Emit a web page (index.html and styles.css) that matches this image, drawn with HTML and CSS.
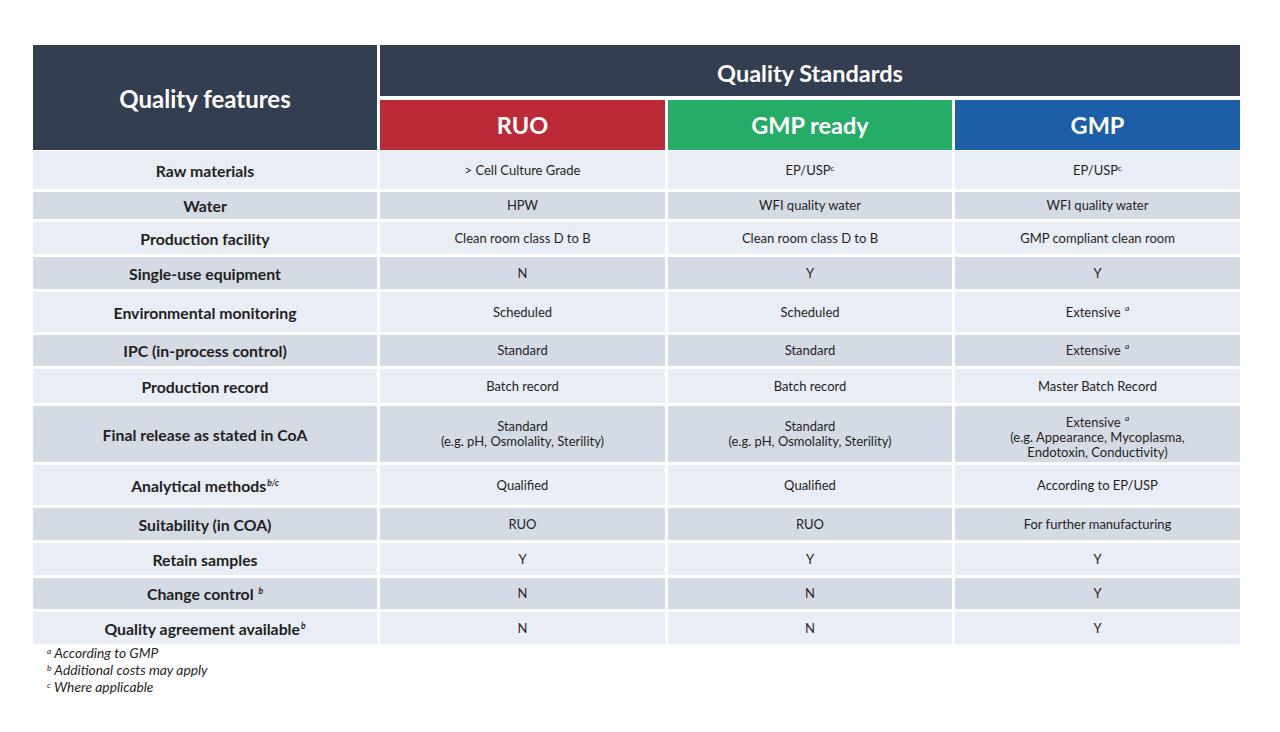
FILE: index.html
```html
<!DOCTYPE html>
<html>
<head>
<meta charset="utf-8">
<link rel="stylesheet" href="styles.css">
</head>
<body>
<div class="page">
  <div class="head">
    <div class="hcell features">Quality features</div>
    <div class="hcell standards">Quality Standards</div>
    <div class="hcell ruo">RUO</div>
    <div class="hcell ready">GMP ready</div>
    <div class="hcell gmp">GMP</div>
  </div>
  <div class="rows">
    <div class="row light h38"><div class="lab"><span>Raw materials</span></div><div class="val"><span>&gt; Cell Culture Grade</span></div><div class="val"><span>EP/USP<sup class="sc">c</sup></span></div><div class="val"><span>EP/USP<sup class="sc">c</sup></span></div></div>
    <div class="row dark h27"><div class="lab"><span>Water</span></div><div class="val"><span>HPW</span></div><div class="val"><span>WFI quality water</span></div><div class="val"><span>WFI quality water</span></div></div>
    <div class="row light h32"><div class="lab"><span>Production facility</span></div><div class="val"><span>Clean room class D to B</span></div><div class="val"><span>Clean room class D to B</span></div><div class="val"><span>GMP compliant clean room</span></div></div>
    <div class="row dark h32"><div class="lab"><span>Single-use equipment</span></div><div class="val"><span>N</span></div><div class="val"><span>Y</span></div><div class="val"><span>Y</span></div></div>
    <div class="row light h40"><div class="lab"><span>Environmental monitoring</span></div><div class="val"><span>Scheduled</span></div><div class="val"><span>Scheduled</span></div><div class="val"><span>Extensive <sup class="si">a</sup></span></div></div>
    <div class="row dark h31"><div class="lab"><span>IPC (in-process control)</span></div><div class="val"><span>Standard</span></div><div class="val"><span>Standard</span></div><div class="val"><span>Extensive <sup class="si">a</sup></span></div></div>
    <div class="row light h34"><div class="lab"><span>Production record</span></div><div class="val"><span>Batch record</span></div><div class="val"><span>Batch record</span></div><div class="val"><span>Master Batch Record</span></div></div>
    <div class="row dark h56"><div class="lab"><span>Final release as stated in CoA</span></div><div class="val"><span>Standard<br>(e.g. pH, Osmolality, Sterility)</span></div><div class="val"><span>Standard<br>(e.g. pH, Osmolality, Sterility)</span></div><div class="val three"><span>Extensive <sup class="si">a</sup><br>(e.g. Appearance, Mycoplasma,<br>Endotoxin, Conductivity)</span></div></div>
    <div class="row light h40"><div class="lab"><span>Analytical methods<sup class="si">b/c</sup></span></div><div class="val"><span>Qualified</span></div><div class="val"><span>Qualified</span></div><div class="val"><span>According to EP/USP</span></div></div>
    <div class="row dark h32"><div class="lab"><span>Suitability (in COA)</span></div><div class="val"><span>RUO</span></div><div class="val"><span>RUO</span></div><div class="val"><span>For further manufacturing</span></div></div>
    <div class="row light h32"><div class="lab"><span>Retain samples</span></div><div class="val"><span>Y</span></div><div class="val"><span>Y</span></div><div class="val"><span>Y</span></div></div>
    <div class="row dark h31"><div class="lab"><span>Change control <sup class="si">b</sup></span></div><div class="val"><span>N</span></div><div class="val"><span>N</span></div><div class="val"><span>Y</span></div></div>
    <div class="row light h32"><div class="lab"><span>Quality agreement available<sup class="si">b</sup></span></div><div class="val"><span>N</span></div><div class="val"><span>N</span></div><div class="val"><span>Y</span></div></div>
  </div>
  <div class="notes">
    <div><sup class="ns">a</sup> According to GMP</div>
    <div><sup class="ns">b</sup> Additional costs may apply</div>
    <div><sup class="ns">c</sup> Where applicable</div>
  </div>
</div>
</body>
</html>
```

FILE: styles.css
```css
html, body {
  margin: 0;
  padding: 0;
  background: #ffffff;
}
.page {
  padding: 45px 0 0 33px;
  font-family: Lato, "Liberation Sans", sans-serif;
  color: #1f1f1f;
}
.head {
  display: grid;
  grid-template-columns: 344px 285px 284px 285px;
  grid-template-rows: 51px 50px;
  column-gap: 3px;
  row-gap: 4px;
  width: 1207px;
}
.hcell {
  display: flex;
  align-items: center;
  justify-content: center;
  color: #ffffff;
  font-weight: 700;
  font-size: 23.5px;
}
.features {
  grid-row: 1 / 3;
  background: #333e50;
  padding-top: 1px;
  font-size: 24px;
}
.standards {
  grid-column: 2 / 5;
  background: #333e50;
  padding-top: 4px;
}
.ruo { background: #bd2a37; }
.ready { background: #25ac67; }
.gmp { background: #1c5fa8; }

.rows {
  display: flex;
  flex-direction: column;
  gap: 3px;
  margin-top: 1px;
  width: 1207px;
}
.row {
  display: grid;
  grid-template-columns: 344px 285px 284px 285px;
  column-gap: 3px;
}
.row > div {
  display: flex;
  align-items: center;
  justify-content: center;
  text-align: center;
}
.light > div { background: #e9edf5; }
.dark > div { background: #d5dbe5; }
.h27 { height: 27px; }
.h31 { height: 31px; }
.h32 { height: 32px; }
.h34 { height: 34px; }
.h38 { height: 38px; }
.h40 { height: 40px; }
.h56 { height: 56px; }

.lab {
  font-weight: 700;
  font-size: 15.8px;
}
.val {
  font-size: 13px;
  line-height: 15px;
}
.row > .three {
  padding-top: 6px;
  box-sizing: border-box;
}
sup {
  line-height: 0;
}
.sc {
  font-size: 8px;
  vertical-align: 4px;
}
.si {
  font-style: italic;
  font-size: 8.5px;
  vertical-align: 6px;
  margin-left: 1px;
}
.notes {
  padding: 0 0 0 14px;
  font-style: italic;
  font-size: 13.8px;
  line-height: 17px;
}
.ns {
  font-size: 8.5px;
  vertical-align: 4px;
}
```
